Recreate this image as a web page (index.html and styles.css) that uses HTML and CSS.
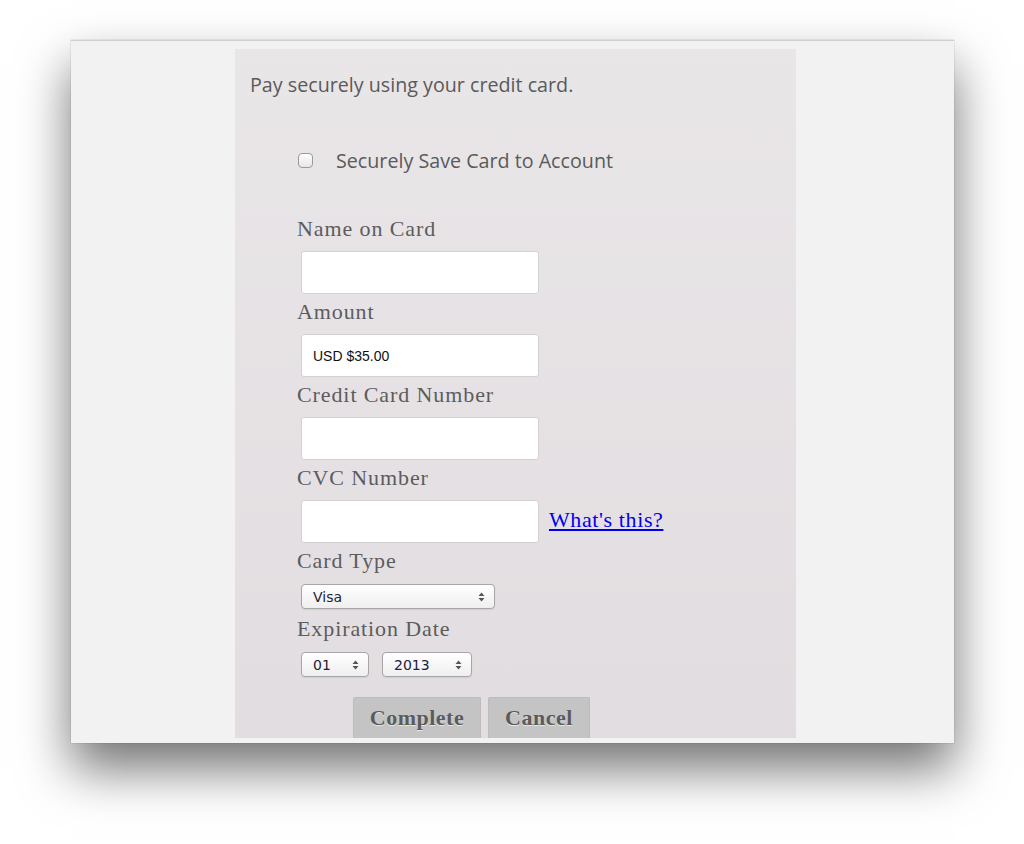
FILE: index.html
```html
<!DOCTYPE html>
<html>
<head>
<meta charset="utf-8">
<link rel="stylesheet" href="styles.css">
</head>
<body>
<div class="window">
  <div class="panel">
    <p class="intro">Pay securely using your credit card.</p>
    <div class="save-row">
      <span class="checkbox"></span>
      <span class="save-label">Securely Save Card to Account</span>
    </div>
    <form class="fields">
      <label class="lbl">Name on Card</label>
      <input class="txt" type="text">
      <label class="lbl">Amount</label>
      <input class="txt" type="text" value="USD $35.00">
      <label class="lbl">Credit Card Number</label>
      <input class="txt" type="text">
      <label class="lbl">CVC Number</label>
      <div class="cvc-row">
        <input class="txt" type="text">
        <a class="help" href="#">What's this?</a>
      </div>
      <label class="lbl">Card Type</label>
      <div class="sel sel-type"><span>Visa</span><svg class="arrows" width="7" height="10" viewBox="0 0 7 10"><path d="M3.5 0.5 L6.5 4 L0.5 4 Z M3.5 9.5 L6.5 6 L0.5 6 Z" fill="#555"/></svg></div>
      <label class="lbl lbl-exp">Expiration Date</label>
      <div class="exp-row">
        <div class="sel sel-month"><span>01</span><svg class="arrows" width="7" height="10" viewBox="0 0 7 10"><path d="M3.5 0.5 L6.5 4 L0.5 4 Z M3.5 9.5 L6.5 6 L0.5 6 Z" fill="#555"/></svg></div>
        <div class="sel sel-year"><span>2013</span><svg class="arrows" width="7" height="10" viewBox="0 0 7 10"><path d="M3.5 0.5 L6.5 4 L0.5 4 Z M3.5 9.5 L6.5 6 L0.5 6 Z" fill="#555"/></svg></div>
      </div>
      <div class="buttons">
        <button type="button" class="btn btn-complete">Complete</button>
        <button type="button" class="btn btn-cancel">Cancel</button>
      </div>
    </form>
  </div>
</div>
</body>
</html>
```
FILE: styles.css
```css
html, body {
  margin: 0;
  padding: 0;
  background: #ffffff;
}
body {
  padding-top: 40px;
  height: 804px;
  overflow: hidden;
}
.window {
  margin-left: 71px;
  width: 883px;
  height: 703px;
  box-sizing: border-box;
  background: #f2f2f2;
  border-top: 1px solid #d0d0d0;
  box-shadow: 0 26px 48px rgba(0, 0, 0, 0.55), 0 0 1px rgba(0, 0, 0, 0.35);
  padding-top: 8px;
}
.panel {
  margin-left: 164px;
  width: 561px;
  height: 689px;
  overflow: hidden;
  box-sizing: border-box;
  padding: 24px 15px 0;
  background: linear-gradient(#e9e6e8, #e2dde0);
}
.intro {
  margin: 0;
  font-family: "Open Sans", sans-serif;
  font-size: 19.7px;
  line-height: 24px;
  color: #5a5a5a;
}
.save-row {
  margin-top: 51px;
  padding-left: 48px;
  display: flex;
  align-items: center;
  height: 24px;
}
.checkbox {
  width: 15px;
  height: 15px;
  border: 1px solid #9a9a9a;
  border-radius: 4px;
  background: linear-gradient(#ffffff, #e6e6e6);
  box-sizing: border-box;
  flex: none;
}
.save-label {
  margin-left: 23px;
  font-family: "Open Sans", sans-serif;
  font-size: 19.7px;
  color: #5a5a5a;
}
.fields {
  margin: 45px 0 0;
  padding-left: 47px;
}
.lbl {
  display: block;
  font-family: "Liberation Serif", serif;
  font-size: 22px;
  letter-spacing: 0.9px;
  line-height: 24px;
  color: #5c5c5c;
}
.txt {
  display: block;
  margin: 10px 0 6px 4px;
  width: 238px;
  height: 43px;
  box-sizing: border-box;
  border: 1px solid #d2d2d2;
  border-radius: 3px;
  background: #ffffff;
  padding: 0 11px;
  font-family: "Liberation Sans", sans-serif;
  font-size: 14px;
  color: #111;
  outline: none;
}
.cvc-row {
  display: flex;
  align-items: center;
}
.help {
  margin-left: 10px;
  margin-top: 0;
  font-family: "Liberation Serif", serif;
  font-size: 22px;
  letter-spacing: 0.6px;
  color: #0000ee;
  text-decoration: underline;
}
.sel {
  position: relative;
  display: flex;
  align-items: center;
  height: 25px;
  box-sizing: border-box;
  border: 1px solid #a6a6a6;
  border-radius: 4px;
  background: linear-gradient(#ffffff, #efefef);
  box-shadow: 0 1px 1px rgba(0, 0, 0, 0.08);
  padding-left: 11px;
  font-family: "DejaVu Sans", "Liberation Sans", sans-serif;
  font-size: 14px;
  font-weight: 500;
  color: #22223a;
}
.sel-type {
  margin: 11px 0 8px 4px;
  width: 194px;
}
.arrows {
  position: absolute;
  right: 9px;
  top: 7px;
}
.exp-row {
  display: flex;
  gap: 13px;
  margin: 11px 0 0 4px;
}
.sel-month {
  width: 68px;
}
.sel-year {
  width: 90px;
}
.buttons {
  display: flex;
  gap: 7px;
  margin-top: 20px;
  padding-left: 56px;
}
.btn {
  height: 41px;
  box-sizing: border-box;
  border: 1px solid #bcbcbc;
  border-bottom: none;
  border-radius: 2px 2px 0 0;
  background: #c4c4c4;
  font-family: "Liberation Serif", serif;
  font-weight: bold;
  font-size: 22px;
  letter-spacing: 0.5px;
  color: #5b5b5b;
  text-shadow: 0 1px 0 rgba(255, 255, 255, 0.6);
  padding: 0;
}
.btn-complete {
  width: 128px;
}
.btn-cancel {
  width: 102px;
}
```
